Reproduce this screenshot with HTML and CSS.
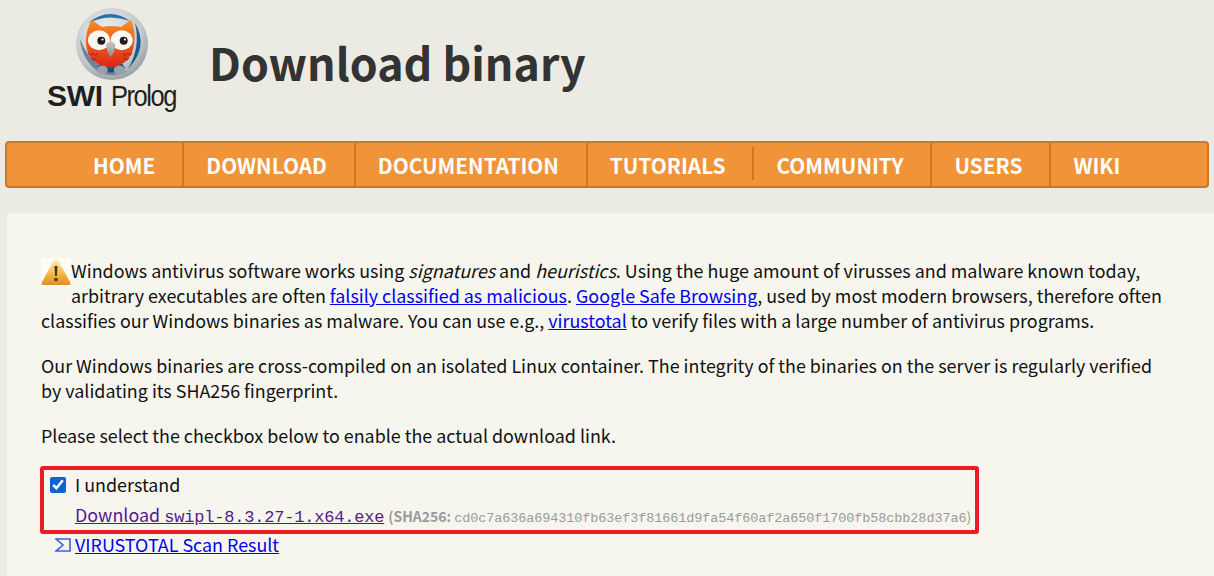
FILE: index.html
```html
<!DOCTYPE html>
<html lang="en">
<head>
<meta charset="utf-8">
<title>Download binary</title>
<link rel="stylesheet" href="styles.css">
</head>
<body>
<header class="top">
  <div class="logo">
    <svg class="owl" viewBox="0 0 76 76" width="76" height="76">
      <defs>
        <radialGradient id="ring" cx="42%" cy="35%" r="70%"><stop offset="0" stop-color="#f2f3f4"/><stop offset=".7" stop-color="#c3c8cc"/><stop offset="1" stop-color="#8f979e"/></radialGradient>
        <linearGradient id="body" x1="0" y1="0" x2="0" y2="1"><stop offset="0" stop-color="#f6901f"/><stop offset=".5" stop-color="#ee5a1c"/><stop offset="1" stop-color="#dc211b"/></linearGradient>
        <linearGradient id="beak" x1="0" y1="0" x2="0" y2="1"><stop offset="0" stop-color="#c6cac9"/><stop offset="1" stop-color="#878c8c"/></linearGradient>
      </defs>
      <circle cx="37" cy="38" r="36" fill="url(#ring)"/>
      <path d="M5 33 Q7 55 25 67 Q38 72 53 65 Q40 68 28 62 Q12 52 5 33Z" fill="#6d8596"/>
      <path d="M13 17 Q34 0 55 15 Q34 7 13 17Z" fill="#2f6f9f"/>
      <path d="M60 17 Q74 41 53 63 Q66 41 60 17Z" fill="#1c5a8c"/>
      <path d="M22 62 Q35 71 50 62 L46 56 H26Z" fill="#174f80"/>
      <path d="M16.700 14 L27 21 Q36 19 46 21 L56 14 Q61 26 59 38 Q57 58 35 62 Q13 58 11 38 Q10 26 16.700 14Z" fill="url(#body)"/>
      <ellipse cx="24" cy="34.300" rx="11" ry="10" fill="#fbf8f2"/>
      <ellipse cx="46.700" cy="34.300" rx="11" ry="10" fill="#fbf8f2"/>
      <circle cx="26.300" cy="34.700" r="4" fill="#1d1d1d"/>
      <circle cx="48.700" cy="34.700" r="4" fill="#1d1d1d"/>
      <circle cx="27.500" cy="33.500" r="1.100" fill="#fff"/>
      <circle cx="49.900" cy="33.500" r="1.100" fill="#fff"/>
      <path d="M31 38 Q35.500 33 40.300 38 Q40 46 35.700 51.300 Q31.500 46 31 38Z" fill="url(#beak)"/>
      <path d="M13 47 l2.500 2.500 2.500-2.500 2.500 2.500 2.500-2.500M16 52 l2.500 2.500 2.500-2.500M48 47 l2 2.500 2.500-2.500 2.500 2.500 2-2.500M49 52 l2.500 2.500 2.500-2.500" stroke="#8a1a12" stroke-width=".9" fill="none"/>
      <ellipse cx="27.300" cy="64" rx="5.500" ry="4.500" fill="#9aa1a7"/>
      <ellipse cx="44.300" cy="64" rx="5.500" ry="4.500" fill="#9aa1a7"/>
    </svg>
    <svg class="wordmark" viewBox="0 0 132 30" width="132" height="30"><text x="1" y="24" class="swi">SWI</text><text transform="translate(65 24) scale(.85 1)" class="prolog">Prolog</text></svg>
  </div>
  <h1 class="title">Download binary</h1>
</header>

<nav class="nav">
  <a class="nav-item first">HOME</a>
  <a class="nav-item">DOWNLOAD</a>
  <a class="nav-item">DOCUMENTATION</a>
  <a class="nav-item short">TUTORIALS</a>
  <a class="nav-item">COMMUNITY</a>
  <a class="nav-item">USERS</a>
  <a class="nav-item last">WIKI</a>
</nav>

<main class="panel">
  <p class="warn">
    <svg class="warn-icon" viewBox="0 0 30 30" width="30" height="30">
      <defs><linearGradient id="tri" x1="0" y1="0" x2="0" y2="1"><stop offset="0" stop-color="#fdf0c0"/><stop offset=".6" stop-color="#f2b544"/><stop offset="1" stop-color="#dc8f22"/></linearGradient></defs>
      <rect width="30" height="30" fill="#fdfcf6"/>
      <path d="M15 1 Q16.500 1 17.500 3 L29.500 25 Q30 27 28 27 L2 27 Q0 27 .5 25 L12.500 3 Q13.500 1 15 1Z" fill="url(#tri)"/>
      <path d="M13.500 8 h3 l-.6 10 h-1.800Z" fill="#4a3410"/>
      <circle cx="15" cy="21.500" r="1.700" fill="#4a3410"/>
    </svg>
    Windows antivirus software works using <em>signatures</em> and <em>heuristics</em>. Using the huge amount of virusses and malware known today, arbitrary executables are often <a href="#a">falsily classified as malicious</a>. <a href="#b">Google Safe Browsing</a>, used by most modern browsers, therefore often classifies our Windows binaries as malware. You can use e.g., <a href="#c">virustotal</a> to verify files with a large number of antivirus programs.
  </p>
  <p>Our Windows binaries are cross-compiled on an isolated Linux container. The integrity of the binaries on the server is regularly verified by validating its SHA256 fingerprint.</p>
  <p class="lead">Please select the checkbox below to enable the actual download link.</p>

  <div class="highlight">
    <label class="agree"><input type="checkbox" class="check" checked> I understand</label>
    <div class="dl"><a class="dl-link" href="#d">Download <span class="mono">swipl-8.3.27-1.x64.exe</span></a> <span class="sha"><span class="sha-label">(SHA256:</span> <span class="mono sha-val">cd0c7a636a694310fb63ef3f81661d9fa54f60af2a650f1700fb58cbb28d37a6</span>)</span></div>
  </div>
  <div class="vt">
    <svg class="vt-icon" viewBox="0 0 16 14" width="16" height="14"><path d="M1 1H15V13H1L8 7Z" fill="none" stroke="#3b62e0" stroke-width="1.600"/></svg>
    <a href="#e">VIRUSTOTAL Scan Result</a>
  </div>
</main>
</body>
</html>
```
FILE: styles.css
```css
html, body { margin: 0; padding: 0; height: 576px; overflow: hidden; }
body {
  background: #ebebe3;
  font-family: "Noto Sans CJK SC", "Noto Sans", sans-serif;
  font-size: 17.9px;
  line-height: 25px;
  color: #111;
}
a { color: #0000ee; text-decoration: underline; }

.top { display: flex; align-items: flex-start; height: 141px; }
.logo { width: 132px; margin-left: 46px; padding-top: 6px; display: flex; flex-direction: column; align-items: center; }
.owl { margin-left: 2px; display: block; }
.wordmark { display: block; overflow: visible; }
.swi { font: bold 30px "Liberation Sans", sans-serif; fill: #1f1f1f; letter-spacing: -.3px; }
.prolog { font: 30px "Liberation Sans", sans-serif; fill: #1f1f1f; letter-spacing: -1.700px; }
.title { margin: 29px 0 0 31px; font-size: 44.7px; line-height: 66px; font-weight: 700; color: #333; }

.nav {
  display: flex;
  box-sizing: border-box;
  margin: 0 5px;
  width: 1204px;
  height: 47px;
  background: #f09339;
  border: 2px solid #d3761f;
  border-radius: 4px;
  padding-left: 64px;
}
.nav-item {
  color: #fff;
  text-decoration: none;
  font-weight: 700;
  font-size: 20.8px;
  line-height: 44px;
  padding: 0 26.7px 0 22.3px;
  border-right: 2px solid #d3761f;
}
.nav-item.first { padding-left: 22px; }
.nav-item.short { border-right: 0; position: relative; padding-right: 28.7px; }
.nav-item.short::after { content: ""; position: absolute; right: 0; top: 4px; height: 33px; width: 2px; background: #d3761f; }
.nav-item.last { border-right: 0; }

.panel {
  margin: 25px 0 0 7px;
  background: #f6f6ee;
  height: 363px;
  padding: 45px 40px 0 34px;
  box-sizing: border-box;
}
.panel p { margin: 0 0 20px; }
.panel p.lead { margin-bottom: 18px; }
.warn-icon { float: left; }

.highlight {
  width: 939px;
  height: 68px;
  margin-left: -1px;
  box-sizing: border-box;
  border: 4px solid #ed1c24;
  border-radius: 3px;
  padding: 0 0 0 6px;
}
.agree { display: flex; align-items: center; gap: 9px; height: 29px; }
.check { margin: 0; width: 16px; height: 16px; accent-color: #0b63d6; }
.dl { padding-left: 25px; white-space: nowrap; line-height: 30px; }
.dl-link { color: #551a8b; }
.mono { font-family: "Liberation Mono", monospace; font-size: 17px; letter-spacing: -.2px; }
.sha { color: #9a9a9a; font-size: 14px; }
.sha-label { font-weight: 700; }
.sha-val { font-size: 13.500px; letter-spacing: -.1px; }
.vt { display: flex; align-items: center; gap: 4px; padding-left: 14px; margin-top: -2px; }
```
